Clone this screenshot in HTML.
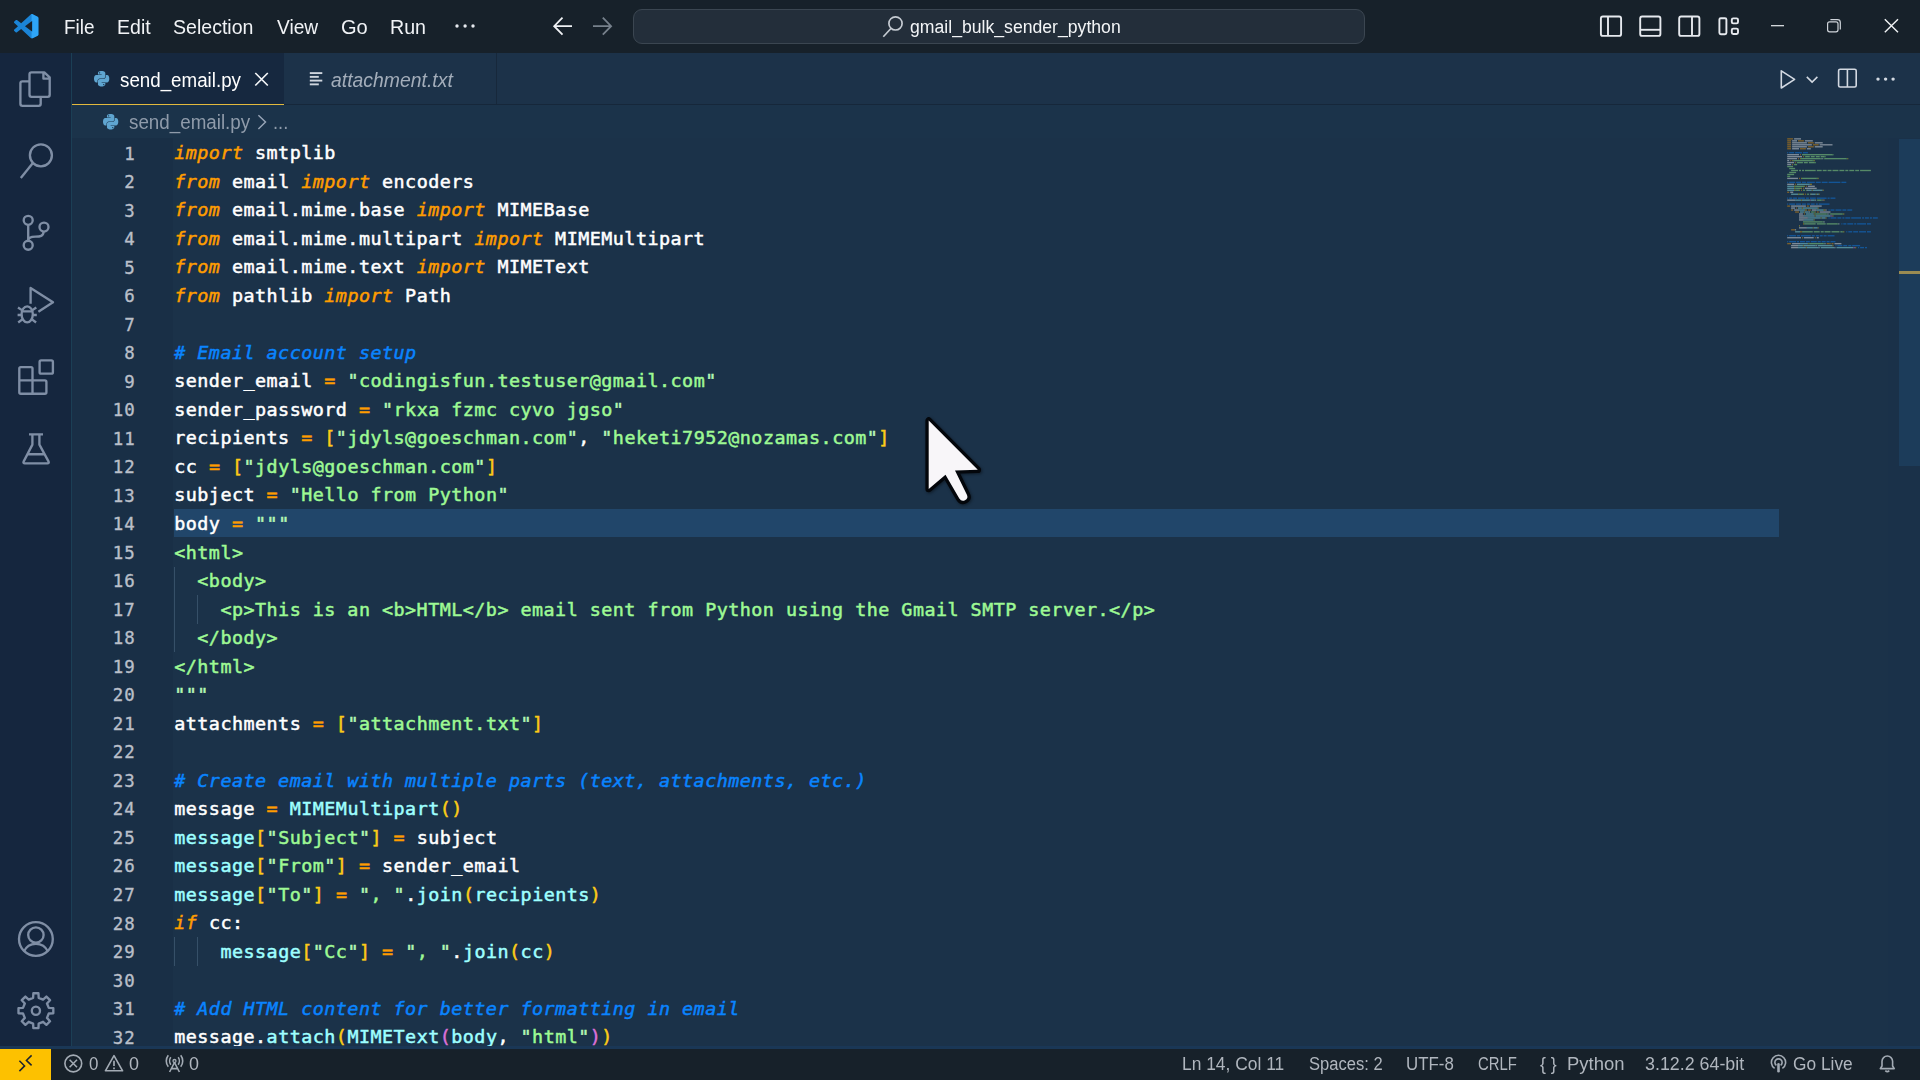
<!DOCTYPE html>
<html lang="en"><head><meta charset="utf-8"><title>send_email.py - gmail_bulk_sender_python - Visual Studio Code</title>
<style>

*{box-sizing:border-box;margin:0;padding:0}
html,body{width:1920px;height:1080px;overflow:hidden;background:#1b3249}
body{font-family:"Liberation Sans",sans-serif;color:#fff}
#app{position:relative;width:1920px;height:1080px;overflow:hidden;background:#1b3249}
svg{position:absolute;overflow:visible}
/* title bar */
#titlebar{position:absolute;left:0;top:0;width:1920px;height:52.5px;background:#17212a}
#search{position:absolute;left:633px;top:9px;width:732px;height:35px;border:1px solid #3b4651;border-radius:9px;background:#232e3a}
/* activity bar */
#activity{position:absolute;left:0;top:52.5px;width:71.5px;height:996px;background:#15263e}
#actborder{position:absolute;left:71px;top:52.5px;width:1px;height:996px;background:#1b3f55}
/* tabs */
#tabbar{position:absolute;left:72px;top:52.5px;width:1848px;height:52.5px;background:#1c3249}
#tabline{position:absolute;left:72px;top:104.2px;width:1848px;height:1px;background:#16273a}
#tab1{position:absolute;left:72px;top:52.5px;width:211.5px;height:52.5px;background:#16283f}
#tab1u{position:absolute;left:72px;top:103.6px;width:211.5px;height:1.6px;background:#e2b93d}
#tab2{position:absolute;left:284.5px;top:52.5px;width:212px;height:52px;background:#1c3249;border-right:1px solid #17283b}
/* breadcrumb */
#bc{position:absolute;left:72px;top:105px;width:1848px;height:33px;background:#1b334a}
/* editor */
#editor{position:absolute;left:0;top:0;width:1920px;height:1048.5px;overflow:hidden;pointer-events:none}
#gutter{position:absolute;left:72px;top:138px;width:101px;height:911px;background:#192f46}
#hl{position:absolute;left:174px;top:508.6px;width:1605px;height:28.5px;background:#21466a}
.ln{position:absolute;left:72px;width:63.9px;text-align:right;font:17.4px/28.5px "DejaVu Sans Mono",monospace;letter-spacing:1.05px;color:#b9bfc9;white-space:pre;height:28.5px;-webkit-text-stroke:0.35px;margin-top:0.6px}
.cl{position:absolute;left:174.25px;font:18.4px/28.5px "DejaVu Sans Mono",monospace;letter-spacing:0.469px;white-space:pre;height:28.5px;-webkit-text-stroke:0.5px;margin-top:0.3px}
.guide{position:absolute;width:1.3px;background:#365068}
.k{color:#ff9d00;font-style:italic}
.w{color:#ffffff}
.s{color:#9ef994}
.q{color:#b4f7b4}
.c{color:#0a84ff;font-style:italic}
.o{color:#ff9d00}
.y{color:#fbcb17}
.p{color:#da70d6}
.f{color:#9effff}
.t{position:absolute;white-space:pre;transform-origin:0 0;font-family:"Liberation Sans",sans-serif}
#sbtrack{position:absolute;left:1888px;top:138px;width:32px;height:911px;background:#1a3149}
#slider{position:absolute;left:1899px;top:138.5px;width:21px;height:327px;background:#1c3c5a}
#sbmark{position:absolute;left:1899px;top:271px;width:21px;height:3px;background:#9a8b52}
/* status bar */
#status{position:absolute;left:0;top:1048.8px;width:1920px;height:31.2px;background:#17212a}
#stborder{position:absolute;left:0;top:1046.2px;width:1920px;height:2.8px;background:#1a3756}
#remote{position:absolute;left:0;top:0;width:51px;height:31.5px;background:#fdc100}

</style></head>
<body>
<div id="app">
<div id="titlebar"><div class="t" style="left:64.31px;top:17.15px;font-size:19.5px;line-height:21.78px;color:#f1f3f6;transform:scaleX(0.9699)">File</div><div class="t" style="left:117.17px;top:17.15px;font-size:19.5px;line-height:21.78px;color:#f1f3f6;transform:scaleX(1.0010)">Edit</div><div class="t" style="left:173.41px;top:17.15px;font-size:19.5px;line-height:21.78px;color:#f1f3f6;transform:scaleX(1.0027)">Selection</div><div class="t" style="left:276.81px;top:17.15px;font-size:19.5px;line-height:21.78px;color:#f1f3f6;transform:scaleX(0.9823)">View</div><div class="t" style="left:340.78px;top:17.15px;font-size:19.5px;line-height:21.78px;color:#f1f3f6;transform:scaleX(1.0277)">Go</div><div class="t" style="left:389.71px;top:17.15px;font-size:19.5px;line-height:21.78px;color:#f1f3f6;transform:scaleX(1.0057)">Run</div><div id="search"></div><div class="t" style="left:910.32px;top:16.71px;font-size:18px;line-height:20.11px;color:#f3f5f7;transform:scaleX(0.9794)">gmail_bulk_sender_python</div><svg style="left:13.8px;top:13.6px" width="24.4" height="24.4" viewBox="0 0 100 100"><defs><clipPath id="vsr"><rect x="72" y="-2" width="30" height="104"/></clipPath></defs><path d="M70.9119 99.3171C72.4869 99.9307 74.2828 99.8914 75.8725 99.1264L96.4608 89.2197C98.6242 88.1787 100 85.9892 100 83.5872V16.4133C100 14.0113 98.6243 11.8218 96.4609 10.7808L75.8725 0.873756C73.7862 -0.130129 71.3446 0.11576 69.5135 1.44695C69.252 1.63711 69.0028 1.84943 68.769 2.08341L29.3551 38.0415L12.1872 25.0096C10.589 23.7965 8.35363 23.8959 6.86933 25.2461L1.36303 30.2549C-0.452552 31.9064 -0.454633 34.7627 1.35853 36.417L16.2471 50.0001L1.35853 63.5832C-0.454633 65.2374 -0.452552 68.0938 1.36303 69.7453L6.86933 74.7541C8.35363 76.1043 10.589 76.2037 12.1872 74.9905L29.3551 61.9587L68.769 97.9167C69.3925 98.5406 70.1246 99.0104 70.9119 99.3171ZM75.0152 27.2989L45.1091 50.0001L75.0152 72.7012V27.2989Z" fill="#1b84d6" fill-rule="evenodd"/><path d="M70.9119 99.3171C72.4869 99.9307 74.2828 99.8914 75.8725 99.1264L96.4608 89.2197C98.6242 88.1787 100 85.9892 100 83.5872V16.4133C100 14.0113 98.6243 11.8218 96.4609 10.7808L75.8725 0.873756C73.7862 -0.130129 71.3446 0.11576 69.5135 1.44695C69.252 1.63711 69.0028 1.84943 68.769 2.08341L29.3551 38.0415L12.1872 25.0096C10.589 23.7965 8.35363 23.8959 6.86933 25.2461L1.36303 30.2549C-0.452552 31.9064 -0.454633 34.7627 1.35853 36.417L16.2471 50.0001L1.35853 63.5832C-0.454633 65.2374 -0.452552 68.0938 1.36303 69.7453L6.86933 74.7541C8.35363 76.1043 10.589 76.2037 12.1872 74.9905L29.3551 61.9587L68.769 97.9167C69.3925 98.5406 70.1246 99.0104 70.9119 99.3171ZM75.0152 27.2989L45.1091 50.0001L75.0152 72.7012V27.2989Z" fill="#2ea5f7" fill-rule="evenodd" clip-path="url(#vsr)"/></svg><svg style="left:0;top:0" width="1920" height="1080" ><circle cx="457" cy="26" r="1.7" fill="#e6e9ee"/><circle cx="465.1" cy="26" r="1.7" fill="#e6e9ee"/><circle cx="473" cy="26" r="1.7" fill="#e6e9ee"/><path fill="none" stroke="#f0f2f5" stroke-width="1.8" d="M572 26.2H554.5 M562.5 17.7L554.2 26.2L562.5 34.7"/><path fill="none" stroke="#77818c" stroke-width="1.8" d="M593 26.2H610.8 M602.8 17.7L611.1 26.2L602.8 34.7"/><circle fill="none" stroke="#c5cbd2" stroke-width="1.7" cx="895.5" cy="23.4" r="6.6"/><path stroke="#c5cbd2" stroke-width="1.7" d="M890.9 28.5L883.3 36.8"/><rect fill="none" stroke="#e6e9ee" stroke-width="1.9" stroke-linejoin="round" x="1600.9" y="16.5" width="20.2" height="19.4" rx="2"/><path fill="none" stroke="#e6e9ee" stroke-width="1.9" stroke-linejoin="round" d="M1608 16.5V35.9"/><rect fill="none" stroke="#e6e9ee" stroke-width="1.9" stroke-linejoin="round" x="1640.2" y="16.5" width="20.2" height="19.4" rx="2"/><path fill="none" stroke="#e6e9ee" stroke-width="1.9" stroke-linejoin="round" d="M1640.2 29.8H1660.4"/><rect fill="none" stroke="#e6e9ee" stroke-width="1.9" stroke-linejoin="round" x="1679.2" y="16.5" width="20.2" height="19.4" rx="2"/><path fill="none" stroke="#e6e9ee" stroke-width="1.9" stroke-linejoin="round" d="M1692 16.5V35.9"/><rect fill="none" stroke="#e6e9ee" stroke-width="1.9" stroke-linejoin="round" x="1719.4" y="18.2" width="7" height="16" rx="1.4"/><rect fill="none" stroke="#e6e9ee" stroke-width="1.9" stroke-linejoin="round" x="1731.8" y="18.4" width="6.2" height="5" rx="1.4"/><rect fill="none" stroke="#e6e9ee" stroke-width="1.9" stroke-linejoin="round" x="1731.8" y="28.6" width="6.2" height="5.4" rx="1.4"/><path stroke="#e8ebef" stroke-width="1.2" d="M1771 25.7H1784"/><rect fill="none" stroke="#cfd4da" stroke-width="1.2" x="1827.6" y="21.8" width="10.4" height="10" rx="2"/><path fill="none" stroke="#cfd4da" stroke-width="1.2" d="M1830.4 19.6H1837.5Q1840.3 19.6 1840.3 22.4V29.6"/><path stroke="#f2f4f6" stroke-width="1.4" d="M1884.8 19.2L1898 32.2 M1898 19.2L1884.8 32.2"/></svg></div>
<div id="activity"></div><div id="actborder"></div><svg style="left:0;top:0" width="1920" height="1080" ><path fill="none" stroke="#7f8ea5" stroke-width="2.35" stroke-linejoin="round" stroke-linecap="butt" d="M31.5 72.3H44.3L49.7 77.3V94.8Q49.7 96.8 47.7 96.8H31.5Q29.5 96.8 29.5 94.8V74.3Q29.5 72.3 31.5 72.3Z M43.4 72.6V78.6H49.5 M29.5 81.3H22.4Q20.4 81.3 20.4 83.3V103.8Q20.4 105.8 22.4 105.8H38.7Q40.7 105.8 40.7 103.8V97"/><circle fill="none" stroke="#7f8ea5" stroke-width="2.35" stroke-linejoin="round" stroke-linecap="butt" cx="40.9" cy="155.3" r="11"/><path fill="none" stroke="#7f8ea5" stroke-width="2.35" stroke-linejoin="round" stroke-linecap="butt" d="M32.9 163.1L20.8 177.9"/><circle fill="none" stroke="#7f8ea5" stroke-width="2.35" stroke-linejoin="round" stroke-linecap="butt" cx="28.2" cy="220.3" r="4.5"/><circle fill="none" stroke="#7f8ea5" stroke-width="2.35" stroke-linejoin="round" stroke-linecap="butt" cx="44" cy="227.1" r="4.5"/><circle fill="none" stroke="#7f8ea5" stroke-width="2.35" stroke-linejoin="round" stroke-linecap="butt" cx="28.2" cy="245.2" r="4.5"/><path fill="none" stroke="#7f8ea5" stroke-width="2.35" stroke-linejoin="round" stroke-linecap="butt" d="M28.2 224.8V240.7 M43.6 231.6C43.6 236.2 40 236.6 35.5 236.6C31 236.6 28.2 237.6 28.2 240.7"/><path fill="none" stroke="#7f8ea5" stroke-width="2.35" stroke-linejoin="round" stroke-linecap="butt" d="M30.6 303.8V287.9L53 302.3L38.4 311.7"/><ellipse fill="none" stroke="#7f8ea5" stroke-width="2.35" stroke-linejoin="round" stroke-linecap="butt" cx="27.2" cy="314.3" rx="5.6" ry="8"/><path fill="none" stroke="#7f8ea5" stroke-width="2.35" stroke-linejoin="round" stroke-linecap="butt" d="M21.8 311.3H32.6 M18 307.5L22.3 310.4 M36.3 307.5L32.1 310.4 M17.6 315H21.4 M33 315H36.8 M18.2 322.5L22.4 319.4 M36.1 322.5L32 319.4"/><rect fill="none" stroke="#7f8ea5" stroke-width="2.35" stroke-linejoin="round" stroke-linecap="butt" x="39.6" y="360.4" width="13.3" height="13.3" rx="1.5"/><path fill="none" stroke="#7f8ea5" stroke-width="2.35" stroke-linejoin="round" stroke-linecap="butt" d="M32.5 380.4V368.6Q32.5 367.1 31 367.1H20.8Q19.3 367.1 19.3 368.6V392.2Q19.3 393.7 20.8 393.7H44.9Q46.4 393.7 46.4 392.2V381.9Q46.4 380.4 44.9 380.4H19.3 M32.5 380.4V393.7"/><path fill="none" stroke="#7f8ea5" stroke-width="2.35" stroke-linejoin="round" stroke-linecap="butt" d="M29 434.4H43 M32.4 434.4V444.6L23.6 461.6Q22.9 463.4 24.8 463.4H47.4Q49.3 463.4 48.6 461.6L39.4 444.6V434.4 M27.9 454.2H44.3"/><circle fill="none" stroke="#7f8ea5" stroke-width="2.35" stroke-linejoin="round" stroke-linecap="butt" cx="35.9" cy="939" r="16.9"/><circle fill="none" stroke="#7f8ea5" stroke-width="2.35" stroke-linejoin="round" stroke-linecap="butt" cx="35.9" cy="935" r="7.7"/><path fill="none" stroke="#7f8ea5" stroke-width="2.35" stroke-linejoin="round" stroke-linecap="butt" d="M23.9 951.6C26.6 945.6 31 943.9 35.9 943.9C40.8 943.9 45.2 945.6 47.9 951.6"/><path fill="none" stroke="#7f8ea5" stroke-width="2.35" stroke-linejoin="round" stroke-linecap="butt" d="M33.12 997.80L33.35 993.29L38.45 993.29L38.68 997.80L43.06 999.61L46.41 996.58L50.02 1000.19L46.99 1003.54L48.80 1007.92L53.31 1008.15L53.31 1013.25L48.80 1013.48L46.99 1017.86L50.02 1021.21L46.41 1024.82L43.06 1021.79L38.68 1023.60L38.45 1028.11L33.35 1028.11L33.12 1023.60L28.74 1021.79L25.39 1024.82L21.78 1021.21L24.81 1017.86L23.00 1013.48L18.49 1013.25L18.49 1008.15L23.00 1007.92L24.81 1003.54L21.78 1000.19L25.39 996.58L28.74 999.61Z"/><circle fill="none" stroke="#7f8ea5" stroke-width="2.35" stroke-linejoin="round" stroke-linecap="butt" cx="35.9" cy="1010.7" r="4.1"/></svg>
<div id="tabbar"></div><div id="tab1"></div><div id="tab2"></div><div id="tabline"></div><div id="tab1u"></div><div class="t" style="left:120.13px;top:70.05px;font-size:19.5px;line-height:21.78px;color:#ffffff;transform:scaleX(0.9618)">send_email.py</div><div class="t" style="left:331.45px;top:70.05px;font-size:19.5px;line-height:21.78px;color:#a3adba;font-style:italic;transform:scaleX(0.9948)">attachment.txt</div><svg style="left:0;top:0" width="1920" height="1080" ><path stroke="#f4f6f8" stroke-width="1.7" d="M255.3 73L267.8 85.5 M267.8 73L255.3 85.5"/><path stroke="#cfd6de" stroke-width="1.9" d="M309.8 73.1H322.3"/><path stroke="#cfd6de" stroke-width="1.9" d="M309.8 76.85H318.8"/><path stroke="#cfd6de" stroke-width="1.9" d="M309.8 80.6H322.3"/><path stroke="#cfd6de" stroke-width="1.9" d="M309.8 84.35H318.8"/><path fill="none" stroke="#d3d9e2" stroke-width="1.6" stroke-linejoin="round" d="M1781.3 70.8V88L1794.6 79.4Z"/><path fill="none" stroke="#d3d9e2" stroke-width="1.5" d="M1806.8 76.9L1812.1 82.1L1817.4 76.9"/><rect fill="none" stroke="#d3d9e2" stroke-width="1.6" x="1838.6" y="69.2" width="17.6" height="17.8" rx="1.6"/><path stroke="#d3d9e2" stroke-width="1.6" d="M1847.4 69.2V87"/><circle cx="1878" cy="79.1" r="1.7" fill="#d3d9e2"/><circle cx="1885.6" cy="79.1" r="1.7" fill="#d3d9e2"/><circle cx="1893.1" cy="79.1" r="1.7" fill="#d3d9e2"/></svg><svg style="left:93.9px;top:70.6px" width="15.3" height="15.44" viewBox="0 0 111 112"><path d="M54.9 0C50.3 0 45.9 0.4 42.1 1.1C30.8 3.1 28.7 7.3 28.7 15V25.2H55.5V28.6H18.7C10.9 28.6 4.1 33.3 2 42.2C-0.5 52.4-0.6 58.8 2 69.5C3.9 77.4 8.4 83 16.2 83H25.4V70.8C25.4 62 33 54.2 42.1 54.2H68.8C76.2 54.2 82.1 48.1 82.1 40.7V15C82.1 7.8 76 2.3 68.8 1.1C64.2 0.3 59.5 0 54.9 0ZM40.4 8.2C43.2 8.2 45.4 10.5 45.4 13.3C45.4 16.1 43.2 18.4 40.4 18.4C37.6 18.4 35.4 16.1 35.4 13.3C35.4 10.5 37.6 8.2 40.4 8.2Z" fill="#5fa5d0" fill-rule="evenodd"/><path d="M85.6 28.6V40.7C85.6 50 77.7 57.8 68.8 57.8H42.1C34.8 57.8 28.7 64.1 28.7 71.4V96.9C28.7 104.1 35 108.4 42.1 110.5C50.6 113 58.7 113.4 68.8 110.5C75.5 108.5 82.1 104.6 82.1 96.9V86.7H55.5V83.3H95.5C103.3 83.3 106.2 77.9 108.9 69.8C111.7 61.4 111.6 53.3 108.9 42.5C107 34.8 103.3 28.6 95.5 28.6H85.6ZM70.6 93.5C73.4 93.5 75.6 95.8 75.6 98.6C75.6 101.4 73.4 103.7 70.6 103.7C67.8 103.7 65.6 101.4 65.6 98.6C65.6 95.8 67.8 93.5 70.6 93.5Z" fill="#5fa5d0" fill-rule="evenodd"/></svg>
<div id="bc"></div><div class="t" style="left:128.93px;top:112.05px;font-size:19.5px;line-height:21.78px;color:#8f9baa;transform:scaleX(0.9634)">send_email.py</div><div class="t" style="left:273.39px;top:112.05px;font-size:19.5px;line-height:21.78px;color:#8f9baa;transform:scaleX(0.9364)">...</div><svg style="left:0;top:0" width="1920" height="1080" ><path fill="none" stroke="#98a5b7" stroke-width="1.45" d="M258.4 115.3L265.5 122.1L258.4 128.9"/></svg><svg style="left:102.9px;top:114.1px" width="15.3" height="15.44" viewBox="0 0 111 112"><path d="M54.9 0C50.3 0 45.9 0.4 42.1 1.1C30.8 3.1 28.7 7.3 28.7 15V25.2H55.5V28.6H18.7C10.9 28.6 4.1 33.3 2 42.2C-0.5 52.4-0.6 58.8 2 69.5C3.9 77.4 8.4 83 16.2 83H25.4V70.8C25.4 62 33 54.2 42.1 54.2H68.8C76.2 54.2 82.1 48.1 82.1 40.7V15C82.1 7.8 76 2.3 68.8 1.1C64.2 0.3 59.5 0 54.9 0ZM40.4 8.2C43.2 8.2 45.4 10.5 45.4 13.3C45.4 16.1 43.2 18.4 40.4 18.4C37.6 18.4 35.4 16.1 35.4 13.3C35.4 10.5 37.6 8.2 40.4 8.2Z" fill="#5fa5d0" fill-rule="evenodd"/><path d="M85.6 28.6V40.7C85.6 50 77.7 57.8 68.8 57.8H42.1C34.8 57.8 28.7 64.1 28.7 71.4V96.9C28.7 104.1 35 108.4 42.1 110.5C50.6 113 58.7 113.4 68.8 110.5C75.5 108.5 82.1 104.6 82.1 96.9V86.7H55.5V83.3H95.5C103.3 83.3 106.2 77.9 108.9 69.8C111.7 61.4 111.6 53.3 108.9 42.5C107 34.8 103.3 28.6 95.5 28.6H85.6ZM70.6 93.5C73.4 93.5 75.6 95.8 75.6 98.6C75.6 101.4 73.4 103.7 70.6 103.7C67.8 103.7 65.6 101.4 65.6 98.6C65.6 95.8 67.8 93.5 70.6 93.5Z" fill="#5fa5d0" fill-rule="evenodd"/></svg>
<div id="editor">
<div id="gutter"></div>
<div id="hl"></div>
<div class="guide" style="left:174.0px;top:566.7px;height:85.5px"></div>
<div class="guide" style="left:197.1px;top:595.3px;height:28.5px"></div>
<div class="guide" style="left:174.0px;top:937.4px;height:28.5px"></div>
<div class="guide" style="left:197.1px;top:937.4px;height:28.5px"></div>
<div class="ln" style="top:139.00px">1</div>
<div class="cl" style="top:139.00px"><span class="k">import</span><span class="w"> smtplib</span></div>
<div class="ln" style="top:167.52px">2</div>
<div class="cl" style="top:167.52px"><span class="k">from</span><span class="w"> email </span><span class="k">import</span><span class="w"> encoders</span></div>
<div class="ln" style="top:196.03px">3</div>
<div class="cl" style="top:196.03px"><span class="k">from</span><span class="w"> email.mime.base </span><span class="k">import</span><span class="w"> MIMEBase</span></div>
<div class="ln" style="top:224.55px">4</div>
<div class="cl" style="top:224.55px"><span class="k">from</span><span class="w"> email.mime.multipart </span><span class="k">import</span><span class="w"> MIMEMultipart</span></div>
<div class="ln" style="top:253.06px">5</div>
<div class="cl" style="top:253.06px"><span class="k">from</span><span class="w"> email.mime.text </span><span class="k">import</span><span class="w"> MIMEText</span></div>
<div class="ln" style="top:281.58px">6</div>
<div class="cl" style="top:281.58px"><span class="k">from</span><span class="w"> pathlib </span><span class="k">import</span><span class="w"> Path</span></div>
<div class="ln" style="top:310.10px">7</div>
<div class="ln" style="top:338.61px">8</div>
<div class="cl" style="top:338.61px"><span class="c"># Email account setup</span></div>
<div class="ln" style="top:367.13px">9</div>
<div class="cl" style="top:367.13px"><span class="w">sender_email </span><span class="o">=</span><span class="w"> </span><span class="q">"</span><span class="s">codingisfun.testuser@gmail.com</span><span class="q">"</span></div>
<div class="ln" style="top:395.64px">10</div>
<div class="cl" style="top:395.64px"><span class="w">sender_password </span><span class="o">=</span><span class="w"> </span><span class="q">"</span><span class="s">rkxa fzmc cyvo jgso</span><span class="q">"</span></div>
<div class="ln" style="top:424.16px">11</div>
<div class="cl" style="top:424.16px"><span class="w">recipients </span><span class="o">=</span><span class="w"> </span><span class="y">[</span><span class="q">"</span><span class="s">jdyls@goeschman.com</span><span class="q">"</span><span class="w">, </span><span class="q">"</span><span class="s">heketi7952@nozamas.com</span><span class="q">"</span><span class="y">]</span></div>
<div class="ln" style="top:452.68px">12</div>
<div class="cl" style="top:452.68px"><span class="w">cc </span><span class="o">=</span><span class="w"> </span><span class="y">[</span><span class="q">"</span><span class="s">jdyls@goeschman.com</span><span class="q">"</span><span class="y">]</span></div>
<div class="ln" style="top:481.19px">13</div>
<div class="cl" style="top:481.19px"><span class="w">subject </span><span class="o">=</span><span class="w"> </span><span class="q">"</span><span class="s">Hello from Python</span><span class="q">"</span></div>
<div class="ln" style="top:509.71px">14</div>
<div class="cl" style="top:509.71px"><span class="w">body </span><span class="o">=</span><span class="w"> </span><span class="q">"""</span></div>
<div class="ln" style="top:538.22px">15</div>
<div class="cl" style="top:538.22px"><span class="s">&lt;html&gt;</span></div>
<div class="ln" style="top:566.74px">16</div>
<div class="cl" style="top:566.74px"><span class="s">  &lt;body&gt;</span></div>
<div class="ln" style="top:595.26px">17</div>
<div class="cl" style="top:595.26px"><span class="s">    &lt;p&gt;This is an &lt;b&gt;HTML&lt;/b&gt; email sent from Python using the Gmail SMTP server.&lt;/p&gt;</span></div>
<div class="ln" style="top:623.77px">18</div>
<div class="cl" style="top:623.77px"><span class="s">  &lt;/body&gt;</span></div>
<div class="ln" style="top:652.29px">19</div>
<div class="cl" style="top:652.29px"><span class="s">&lt;/html&gt;</span></div>
<div class="ln" style="top:680.80px">20</div>
<div class="cl" style="top:680.80px"><span class="q">"""</span></div>
<div class="ln" style="top:709.32px">21</div>
<div class="cl" style="top:709.32px"><span class="w">attachments </span><span class="o">=</span><span class="w"> </span><span class="y">[</span><span class="q">"</span><span class="s">attachment.txt</span><span class="q">"</span><span class="y">]</span></div>
<div class="ln" style="top:737.84px">22</div>
<div class="ln" style="top:766.35px">23</div>
<div class="cl" style="top:766.35px"><span class="c"># Create email with multiple parts (text, attachments, etc.)</span></div>
<div class="ln" style="top:794.87px">24</div>
<div class="cl" style="top:794.87px"><span class="w">message </span><span class="o">=</span><span class="w"> </span><span class="f">MIMEMultipart</span><span class="y">()</span></div>
<div class="ln" style="top:823.38px">25</div>
<div class="cl" style="top:823.38px"><span class="f">message</span><span class="y">[</span><span class="q">"</span><span class="s">Subject</span><span class="q">"</span><span class="y">]</span><span class="w"> </span><span class="o">=</span><span class="w"> subject</span></div>
<div class="ln" style="top:851.90px">26</div>
<div class="cl" style="top:851.90px"><span class="f">message</span><span class="y">[</span><span class="q">"</span><span class="s">From</span><span class="q">"</span><span class="y">]</span><span class="w"> </span><span class="o">=</span><span class="w"> sender_email</span></div>
<div class="ln" style="top:880.42px">27</div>
<div class="cl" style="top:880.42px"><span class="f">message</span><span class="y">[</span><span class="q">"</span><span class="s">To</span><span class="q">"</span><span class="y">]</span><span class="w"> </span><span class="o">=</span><span class="w"> </span><span class="q">"</span><span class="s">, </span><span class="q">"</span><span class="w">.</span><span class="f">join</span><span class="y">(</span><span class="f">recipients</span><span class="y">)</span></div>
<div class="ln" style="top:908.93px">28</div>
<div class="cl" style="top:908.93px"><span class="k">if</span><span class="w"> cc:</span></div>
<div class="ln" style="top:937.45px">29</div>
<div class="cl" style="top:937.45px"><span class="w">    </span><span class="f">message</span><span class="y">[</span><span class="q">"</span><span class="s">Cc</span><span class="q">"</span><span class="y">]</span><span class="w"> </span><span class="o">=</span><span class="w"> </span><span class="q">"</span><span class="s">, </span><span class="q">"</span><span class="w">.</span><span class="f">join</span><span class="y">(</span><span class="f">cc</span><span class="y">)</span></div>
<div class="ln" style="top:965.96px">30</div>
<div class="ln" style="top:994.48px">31</div>
<div class="cl" style="top:994.48px"><span class="c"># Add HTML content for better formatting in email</span></div>
<div class="ln" style="top:1023.00px">32</div>
<div class="cl" style="top:1023.00px"><span class="w">message.</span><span class="f">attach</span><span class="y">(</span><span class="f">MIMEText</span><span class="p">(</span><span class="f">body</span><span class="w">, </span><span class="q">"</span><span class="s">html</span><span class="q">"</span><span class="p">)</span><span class="y">)</span></div>
<svg style="left:0;top:0" width="1920" height="1080"><g opacity="0.43"><rect x="1787.2" y="138.20" width="5.9" height="1.35" fill="#ff9d00"/><rect x="1794.1" y="138.20" width="6.9" height="1.35" fill="#ffffff"/><rect x="1787.2" y="140.18" width="3.9" height="1.35" fill="#ff9d00"/><rect x="1792.1" y="140.18" width="4.9" height="1.35" fill="#ffffff"/><rect x="1798.0" y="140.18" width="5.9" height="1.35" fill="#ff9d00"/><rect x="1804.9" y="140.18" width="7.9" height="1.35" fill="#ffffff"/><rect x="1787.2" y="142.15" width="3.9" height="1.35" fill="#ff9d00"/><rect x="1792.1" y="142.15" width="14.8" height="1.35" fill="#ffffff"/><rect x="1807.9" y="142.15" width="5.9" height="1.35" fill="#ff9d00"/><rect x="1814.8" y="142.15" width="7.9" height="1.35" fill="#ffffff"/><rect x="1787.2" y="144.13" width="3.9" height="1.35" fill="#ff9d00"/><rect x="1792.1" y="144.13" width="19.7" height="1.35" fill="#ffffff"/><rect x="1812.8" y="144.13" width="5.9" height="1.35" fill="#ff9d00"/><rect x="1819.7" y="144.13" width="12.8" height="1.35" fill="#ffffff"/><rect x="1787.2" y="146.11" width="3.9" height="1.35" fill="#ff9d00"/><rect x="1792.1" y="146.11" width="14.8" height="1.35" fill="#ffffff"/><rect x="1807.9" y="146.11" width="5.9" height="1.35" fill="#ff9d00"/><rect x="1814.8" y="146.11" width="7.9" height="1.35" fill="#ffffff"/><rect x="1787.2" y="148.08" width="3.9" height="1.35" fill="#ff9d00"/><rect x="1792.1" y="148.08" width="6.9" height="1.35" fill="#ffffff"/><rect x="1800.0" y="148.08" width="5.9" height="1.35" fill="#ff9d00"/><rect x="1806.9" y="148.08" width="3.9" height="1.35" fill="#ffffff"/><rect x="1787.2" y="152.04" width="1.0" height="1.35" fill="#0a84ff"/><rect x="1789.2" y="152.04" width="4.9" height="1.35" fill="#0a84ff"/><rect x="1795.1" y="152.04" width="6.9" height="1.35" fill="#0a84ff"/><rect x="1803.0" y="152.04" width="4.9" height="1.35" fill="#0a84ff"/><rect x="1787.2" y="154.02" width="11.8" height="1.35" fill="#ffffff"/><rect x="1800.0" y="154.02" width="1.0" height="1.35" fill="#ff9d00"/><rect x="1802.0" y="154.02" width="1.0" height="1.35" fill="#92fc79"/><rect x="1803.0" y="154.02" width="29.6" height="1.35" fill="#a5ff90"/><rect x="1832.5" y="154.02" width="1.0" height="1.35" fill="#92fc79"/><rect x="1787.2" y="155.99" width="14.8" height="1.35" fill="#ffffff"/><rect x="1803.0" y="155.99" width="1.0" height="1.35" fill="#ff9d00"/><rect x="1804.9" y="155.99" width="1.0" height="1.35" fill="#92fc79"/><rect x="1805.9" y="155.99" width="3.9" height="1.35" fill="#a5ff90"/><rect x="1810.8" y="155.99" width="3.9" height="1.35" fill="#a5ff90"/><rect x="1815.8" y="155.99" width="3.9" height="1.35" fill="#a5ff90"/><rect x="1820.7" y="155.99" width="3.9" height="1.35" fill="#a5ff90"/><rect x="1824.6" y="155.99" width="1.0" height="1.35" fill="#92fc79"/><rect x="1787.2" y="157.97" width="9.8" height="1.35" fill="#ffffff"/><rect x="1798.0" y="157.97" width="1.0" height="1.35" fill="#ff9d00"/><rect x="1800.0" y="157.97" width="1.0" height="1.35" fill="#fbcb17"/><rect x="1801.0" y="157.97" width="1.0" height="1.35" fill="#92fc79"/><rect x="1802.0" y="157.97" width="18.7" height="1.35" fill="#a5ff90"/><rect x="1820.7" y="157.97" width="1.0" height="1.35" fill="#92fc79"/><rect x="1821.7" y="157.97" width="1.0" height="1.35" fill="#ffffff"/><rect x="1823.6" y="157.97" width="1.0" height="1.35" fill="#92fc79"/><rect x="1824.6" y="157.97" width="21.7" height="1.35" fill="#a5ff90"/><rect x="1846.3" y="157.97" width="1.0" height="1.35" fill="#92fc79"/><rect x="1847.3" y="157.97" width="1.0" height="1.35" fill="#fbcb17"/><rect x="1787.2" y="159.95" width="2.0" height="1.35" fill="#ffffff"/><rect x="1790.2" y="159.95" width="1.0" height="1.35" fill="#ff9d00"/><rect x="1792.1" y="159.95" width="1.0" height="1.35" fill="#fbcb17"/><rect x="1793.1" y="159.95" width="1.0" height="1.35" fill="#92fc79"/><rect x="1794.1" y="159.95" width="18.7" height="1.35" fill="#a5ff90"/><rect x="1812.8" y="159.95" width="1.0" height="1.35" fill="#92fc79"/><rect x="1813.8" y="159.95" width="1.0" height="1.35" fill="#fbcb17"/><rect x="1787.2" y="161.92" width="6.9" height="1.35" fill="#ffffff"/><rect x="1795.1" y="161.92" width="1.0" height="1.35" fill="#ff9d00"/><rect x="1797.0" y="161.92" width="1.0" height="1.35" fill="#92fc79"/><rect x="1798.0" y="161.92" width="4.9" height="1.35" fill="#a5ff90"/><rect x="1803.9" y="161.92" width="3.9" height="1.35" fill="#a5ff90"/><rect x="1808.9" y="161.92" width="5.9" height="1.35" fill="#a5ff90"/><rect x="1814.8" y="161.92" width="1.0" height="1.35" fill="#92fc79"/><rect x="1787.2" y="163.90" width="3.9" height="1.35" fill="#ffffff"/><rect x="1792.1" y="163.90" width="1.0" height="1.35" fill="#ff9d00"/><rect x="1794.1" y="163.90" width="3.0" height="1.35" fill="#92fc79"/><rect x="1787.2" y="165.88" width="5.9" height="1.35" fill="#a5ff90"/><rect x="1789.2" y="167.85" width="5.9" height="1.35" fill="#a5ff90"/><rect x="1791.1" y="169.83" width="6.9" height="1.35" fill="#a5ff90"/><rect x="1799.0" y="169.83" width="2.0" height="1.35" fill="#a5ff90"/><rect x="1802.0" y="169.83" width="2.0" height="1.35" fill="#a5ff90"/><rect x="1804.9" y="169.83" width="10.8" height="1.35" fill="#a5ff90"/><rect x="1816.8" y="169.83" width="4.9" height="1.35" fill="#a5ff90"/><rect x="1822.7" y="169.83" width="3.9" height="1.35" fill="#a5ff90"/><rect x="1827.6" y="169.83" width="3.9" height="1.35" fill="#a5ff90"/><rect x="1832.5" y="169.83" width="5.9" height="1.35" fill="#a5ff90"/><rect x="1839.4" y="169.83" width="4.9" height="1.35" fill="#a5ff90"/><rect x="1845.3" y="169.83" width="3.0" height="1.35" fill="#a5ff90"/><rect x="1849.3" y="169.83" width="4.9" height="1.35" fill="#a5ff90"/><rect x="1855.2" y="169.83" width="3.9" height="1.35" fill="#a5ff90"/><rect x="1860.1" y="169.83" width="10.8" height="1.35" fill="#a5ff90"/><rect x="1789.2" y="171.81" width="6.9" height="1.35" fill="#a5ff90"/><rect x="1787.2" y="173.79" width="6.9" height="1.35" fill="#a5ff90"/><rect x="1787.2" y="175.76" width="3.0" height="1.35" fill="#92fc79"/><rect x="1787.2" y="177.74" width="10.8" height="1.35" fill="#ffffff"/><rect x="1799.0" y="177.74" width="1.0" height="1.35" fill="#ff9d00"/><rect x="1801.0" y="177.74" width="1.0" height="1.35" fill="#fbcb17"/><rect x="1802.0" y="177.74" width="1.0" height="1.35" fill="#92fc79"/><rect x="1803.0" y="177.74" width="13.8" height="1.35" fill="#a5ff90"/><rect x="1816.8" y="177.74" width="1.0" height="1.35" fill="#92fc79"/><rect x="1817.7" y="177.74" width="1.0" height="1.35" fill="#fbcb17"/><rect x="1787.2" y="181.69" width="1.0" height="1.35" fill="#0a84ff"/><rect x="1789.2" y="181.69" width="5.9" height="1.35" fill="#0a84ff"/><rect x="1796.1" y="181.69" width="4.9" height="1.35" fill="#0a84ff"/><rect x="1802.0" y="181.69" width="3.9" height="1.35" fill="#0a84ff"/><rect x="1806.9" y="181.69" width="7.9" height="1.35" fill="#0a84ff"/><rect x="1815.8" y="181.69" width="4.9" height="1.35" fill="#0a84ff"/><rect x="1821.7" y="181.69" width="5.9" height="1.35" fill="#0a84ff"/><rect x="1828.6" y="181.69" width="11.8" height="1.35" fill="#0a84ff"/><rect x="1841.4" y="181.69" width="4.9" height="1.35" fill="#0a84ff"/><rect x="1787.2" y="183.67" width="6.9" height="1.35" fill="#ffffff"/><rect x="1795.1" y="183.67" width="1.0" height="1.35" fill="#ff9d00"/><rect x="1797.0" y="183.67" width="12.8" height="1.35" fill="#9effff"/><rect x="1809.9" y="183.67" width="2.0" height="1.35" fill="#fbcb17"/><rect x="1787.2" y="185.65" width="6.9" height="1.35" fill="#9effff"/><rect x="1794.1" y="185.65" width="1.0" height="1.35" fill="#fbcb17"/><rect x="1795.1" y="185.65" width="1.0" height="1.35" fill="#92fc79"/><rect x="1796.1" y="185.65" width="6.9" height="1.35" fill="#a5ff90"/><rect x="1803.0" y="185.65" width="1.0" height="1.35" fill="#92fc79"/><rect x="1803.9" y="185.65" width="1.0" height="1.35" fill="#fbcb17"/><rect x="1805.9" y="185.65" width="1.0" height="1.35" fill="#ff9d00"/><rect x="1807.9" y="185.65" width="6.9" height="1.35" fill="#ffffff"/><rect x="1787.2" y="187.62" width="6.9" height="1.35" fill="#9effff"/><rect x="1794.1" y="187.62" width="1.0" height="1.35" fill="#fbcb17"/><rect x="1795.1" y="187.62" width="1.0" height="1.35" fill="#92fc79"/><rect x="1796.1" y="187.62" width="3.9" height="1.35" fill="#a5ff90"/><rect x="1800.0" y="187.62" width="1.0" height="1.35" fill="#92fc79"/><rect x="1801.0" y="187.62" width="1.0" height="1.35" fill="#fbcb17"/><rect x="1803.0" y="187.62" width="1.0" height="1.35" fill="#ff9d00"/><rect x="1804.9" y="187.62" width="11.8" height="1.35" fill="#ffffff"/><rect x="1787.2" y="189.60" width="6.9" height="1.35" fill="#9effff"/><rect x="1794.1" y="189.60" width="1.0" height="1.35" fill="#fbcb17"/><rect x="1795.1" y="189.60" width="1.0" height="1.35" fill="#92fc79"/><rect x="1796.1" y="189.60" width="2.0" height="1.35" fill="#a5ff90"/><rect x="1798.0" y="189.60" width="1.0" height="1.35" fill="#92fc79"/><rect x="1799.0" y="189.60" width="1.0" height="1.35" fill="#fbcb17"/><rect x="1801.0" y="189.60" width="1.0" height="1.35" fill="#ff9d00"/><rect x="1803.0" y="189.60" width="1.0" height="1.35" fill="#92fc79"/><rect x="1803.9" y="189.60" width="1.0" height="1.35" fill="#a5ff90"/><rect x="1805.9" y="189.60" width="1.0" height="1.35" fill="#92fc79"/><rect x="1806.9" y="189.60" width="1.0" height="1.35" fill="#ffffff"/><rect x="1807.9" y="189.60" width="3.9" height="1.35" fill="#9effff"/><rect x="1811.8" y="189.60" width="1.0" height="1.35" fill="#fbcb17"/><rect x="1812.8" y="189.60" width="9.8" height="1.35" fill="#9effff"/><rect x="1822.7" y="189.60" width="1.0" height="1.35" fill="#fbcb17"/><rect x="1787.2" y="191.58" width="2.0" height="1.35" fill="#ff9d00"/><rect x="1790.2" y="191.58" width="3.0" height="1.35" fill="#ffffff"/><rect x="1791.1" y="193.56" width="6.9" height="1.35" fill="#9effff"/><rect x="1798.0" y="193.56" width="1.0" height="1.35" fill="#fbcb17"/><rect x="1799.0" y="193.56" width="1.0" height="1.35" fill="#92fc79"/><rect x="1800.0" y="193.56" width="2.0" height="1.35" fill="#a5ff90"/><rect x="1802.0" y="193.56" width="1.0" height="1.35" fill="#92fc79"/><rect x="1803.0" y="193.56" width="1.0" height="1.35" fill="#fbcb17"/><rect x="1804.9" y="193.56" width="1.0" height="1.35" fill="#ff9d00"/><rect x="1806.9" y="193.56" width="1.0" height="1.35" fill="#92fc79"/><rect x="1807.9" y="193.56" width="1.0" height="1.35" fill="#a5ff90"/><rect x="1809.9" y="193.56" width="1.0" height="1.35" fill="#92fc79"/><rect x="1810.8" y="193.56" width="1.0" height="1.35" fill="#ffffff"/><rect x="1811.8" y="193.56" width="3.9" height="1.35" fill="#9effff"/><rect x="1815.8" y="193.56" width="1.0" height="1.35" fill="#fbcb17"/><rect x="1816.8" y="193.56" width="2.0" height="1.35" fill="#9effff"/><rect x="1818.7" y="193.56" width="1.0" height="1.35" fill="#fbcb17"/><rect x="1787.2" y="197.51" width="1.0" height="1.35" fill="#0a84ff"/><rect x="1789.2" y="197.51" width="3.0" height="1.35" fill="#0a84ff"/><rect x="1793.1" y="197.51" width="3.9" height="1.35" fill="#0a84ff"/><rect x="1798.0" y="197.51" width="6.9" height="1.35" fill="#0a84ff"/><rect x="1805.9" y="197.51" width="3.0" height="1.35" fill="#0a84ff"/><rect x="1809.9" y="197.51" width="5.9" height="1.35" fill="#0a84ff"/><rect x="1816.8" y="197.51" width="9.8" height="1.35" fill="#0a84ff"/><rect x="1827.6" y="197.51" width="2.0" height="1.35" fill="#0a84ff"/><rect x="1830.5" y="197.51" width="4.9" height="1.35" fill="#0a84ff"/><rect x="1787.2" y="199.49" width="7.9" height="1.35" fill="#ffffff"/><rect x="1795.1" y="199.49" width="5.9" height="1.35" fill="#9effff"/><rect x="1801.0" y="199.49" width="1.0" height="1.35" fill="#fbcb17"/><rect x="1802.0" y="199.49" width="7.9" height="1.35" fill="#9effff"/><rect x="1809.9" y="199.49" width="1.0" height="1.35" fill="#da70d6"/><rect x="1810.8" y="199.49" width="3.9" height="1.35" fill="#9effff"/><rect x="1814.8" y="199.49" width="1.0" height="1.35" fill="#ffffff"/><rect x="1816.8" y="199.49" width="1.0" height="1.35" fill="#92fc79"/><rect x="1817.7" y="199.49" width="3.9" height="1.35" fill="#a5ff90"/><rect x="1821.7" y="199.49" width="1.0" height="1.35" fill="#92fc79"/><rect x="1822.7" y="199.49" width="1.0" height="1.35" fill="#da70d6"/><rect x="1823.6" y="199.49" width="1.0" height="1.35" fill="#fbcb17"/><rect x="1787.2" y="203.44" width="1.0" height="1.35" fill="#0a84ff"/><rect x="1789.2" y="203.44" width="5.9" height="1.35" fill="#0a84ff"/><rect x="1796.1" y="203.44" width="4.9" height="1.35" fill="#0a84ff"/><rect x="1802.0" y="203.44" width="3.9" height="1.35" fill="#0a84ff"/><rect x="1806.9" y="203.44" width="3.0" height="1.35" fill="#0a84ff"/><rect x="1810.8" y="203.44" width="3.9" height="1.35" fill="#0a84ff"/><rect x="1815.8" y="203.44" width="2.0" height="1.35" fill="#0a84ff"/><rect x="1818.7" y="203.44" width="10.8" height="1.35" fill="#0a84ff"/><rect x="1787.2" y="205.42" width="3.0" height="1.35" fill="#ff9d00"/><rect x="1791.1" y="205.42" width="14.8" height="1.35" fill="#ffffff"/><rect x="1806.9" y="205.42" width="2.0" height="1.35" fill="#ff9d00"/><rect x="1809.9" y="205.42" width="11.8" height="1.35" fill="#ffffff"/><rect x="1791.1" y="207.39" width="3.9" height="1.35" fill="#ffffff"/><rect x="1796.1" y="207.39" width="1.0" height="1.35" fill="#ff9d00"/><rect x="1798.0" y="207.39" width="3.9" height="1.35" fill="#9effff"/><rect x="1802.0" y="207.39" width="1.0" height="1.35" fill="#fbcb17"/><rect x="1803.0" y="207.39" width="14.8" height="1.35" fill="#9effff"/><rect x="1817.7" y="207.39" width="1.0" height="1.35" fill="#fbcb17"/><rect x="1791.1" y="209.37" width="2.0" height="1.35" fill="#ff9d00"/><rect x="1794.1" y="209.37" width="4.9" height="1.35" fill="#ffffff"/><rect x="1799.0" y="209.37" width="5.9" height="1.35" fill="#9effff"/><rect x="1804.9" y="209.37" width="2.0" height="1.35" fill="#fbcb17"/><rect x="1807.9" y="209.37" width="3.0" height="1.35" fill="#ff9d00"/><rect x="1811.8" y="209.37" width="4.9" height="1.35" fill="#ffffff"/><rect x="1816.8" y="209.37" width="6.9" height="1.35" fill="#9effff"/><rect x="1823.6" y="209.37" width="2.0" height="1.35" fill="#fbcb17"/><rect x="1825.6" y="209.37" width="1.0" height="1.35" fill="#ffffff"/><rect x="1828.6" y="209.37" width="1.0" height="1.35" fill="#0a84ff"/><rect x="1830.5" y="209.37" width="3.9" height="1.35" fill="#0a84ff"/><rect x="1835.5" y="209.37" width="5.9" height="1.35" fill="#0a84ff"/><rect x="1842.4" y="209.37" width="3.9" height="1.35" fill="#0a84ff"/><rect x="1847.3" y="209.37" width="4.9" height="1.35" fill="#0a84ff"/><rect x="1795.1" y="211.35" width="3.9" height="1.35" fill="#ff9d00"/><rect x="1800.0" y="211.35" width="3.9" height="1.35" fill="#9effff"/><rect x="1803.9" y="211.35" width="1.0" height="1.35" fill="#fbcb17"/><rect x="1804.9" y="211.35" width="3.9" height="1.35" fill="#9effff"/><rect x="1808.9" y="211.35" width="1.0" height="1.35" fill="#ffffff"/><rect x="1810.8" y="211.35" width="1.0" height="1.35" fill="#92fc79"/><rect x="1811.8" y="211.35" width="2.0" height="1.35" fill="#a5ff90"/><rect x="1813.8" y="211.35" width="1.0" height="1.35" fill="#92fc79"/><rect x="1814.8" y="211.35" width="1.0" height="1.35" fill="#fbcb17"/><rect x="1816.8" y="211.35" width="2.0" height="1.35" fill="#ff9d00"/><rect x="1819.7" y="211.35" width="10.8" height="1.35" fill="#ffffff"/><rect x="1799.0" y="213.33" width="3.9" height="1.35" fill="#ffffff"/><rect x="1803.9" y="213.33" width="1.0" height="1.35" fill="#ff9d00"/><rect x="1805.9" y="213.33" width="7.9" height="1.35" fill="#9effff"/><rect x="1813.8" y="213.33" width="1.0" height="1.35" fill="#fbcb17"/><rect x="1814.8" y="213.33" width="1.0" height="1.35" fill="#92fc79"/><rect x="1815.8" y="213.33" width="10.8" height="1.35" fill="#a5ff90"/><rect x="1826.6" y="213.33" width="1.0" height="1.35" fill="#92fc79"/><rect x="1827.6" y="213.33" width="1.0" height="1.35" fill="#ffffff"/><rect x="1829.6" y="213.33" width="1.0" height="1.35" fill="#92fc79"/><rect x="1830.5" y="213.33" width="11.8" height="1.35" fill="#a5ff90"/><rect x="1842.4" y="213.33" width="1.0" height="1.35" fill="#92fc79"/><rect x="1843.3" y="213.33" width="1.0" height="1.35" fill="#fbcb17"/><rect x="1799.0" y="215.30" width="4.9" height="1.35" fill="#ffffff"/><rect x="1803.9" y="215.30" width="10.8" height="1.35" fill="#9effff"/><rect x="1814.8" y="215.30" width="1.0" height="1.35" fill="#fbcb17"/><rect x="1815.8" y="215.30" width="14.8" height="1.35" fill="#9effff"/><rect x="1830.5" y="215.30" width="2.0" height="1.35" fill="#da70d6"/><rect x="1832.5" y="215.30" width="1.0" height="1.35" fill="#fbcb17"/><rect x="1799.0" y="217.28" width="8.9" height="1.35" fill="#ffffff"/><rect x="1807.9" y="217.28" width="12.8" height="1.35" fill="#9effff"/><rect x="1820.7" y="217.28" width="1.0" height="1.35" fill="#fbcb17"/><rect x="1821.7" y="217.28" width="3.9" height="1.35" fill="#9effff"/><rect x="1825.6" y="217.28" width="1.0" height="1.35" fill="#fbcb17"/><rect x="1828.6" y="217.28" width="1.0" height="1.35" fill="#0a84ff"/><rect x="1830.5" y="217.28" width="5.9" height="1.35" fill="#0a84ff"/><rect x="1837.4" y="217.28" width="3.9" height="1.35" fill="#0a84ff"/><rect x="1842.4" y="217.28" width="2.0" height="1.35" fill="#0a84ff"/><rect x="1845.3" y="217.28" width="4.9" height="1.35" fill="#0a84ff"/><rect x="1851.2" y="217.28" width="9.8" height="1.35" fill="#0a84ff"/><rect x="1862.1" y="217.28" width="2.0" height="1.35" fill="#0a84ff"/><rect x="1865.0" y="217.28" width="3.9" height="1.35" fill="#0a84ff"/><rect x="1869.9" y="217.28" width="2.0" height="1.35" fill="#0a84ff"/><rect x="1872.9" y="217.28" width="4.9" height="1.35" fill="#0a84ff"/><rect x="1799.0" y="219.26" width="4.9" height="1.35" fill="#ffffff"/><rect x="1803.9" y="219.26" width="9.8" height="1.35" fill="#9effff"/><rect x="1813.8" y="219.26" width="1.0" height="1.35" fill="#fbcb17"/><rect x="1803.0" y="221.23" width="1.0" height="1.35" fill="#92fc79"/><rect x="1803.9" y="221.23" width="18.7" height="1.35" fill="#a5ff90"/><rect x="1822.7" y="221.23" width="1.0" height="1.35" fill="#92fc79"/><rect x="1823.6" y="221.23" width="1.0" height="1.35" fill="#ffffff"/><rect x="1803.0" y="223.21" width="1.0" height="1.35" fill="#ff9d00"/><rect x="1803.9" y="223.21" width="1.0" height="1.35" fill="#92fc79"/><rect x="1804.9" y="223.21" width="10.8" height="1.35" fill="#a5ff90"/><rect x="1816.8" y="223.21" width="8.9" height="1.35" fill="#a5ff90"/><rect x="1826.6" y="223.21" width="10.8" height="1.35" fill="#a5ff90"/><rect x="1837.4" y="223.21" width="1.0" height="1.35" fill="#92fc79"/><rect x="1838.4" y="223.21" width="1.0" height="1.35" fill="#ffffff"/><rect x="1841.4" y="223.21" width="1.0" height="1.35" fill="#0a84ff"/><rect x="1843.3" y="223.21" width="3.0" height="1.35" fill="#0a84ff"/><rect x="1847.3" y="223.21" width="5.9" height="1.35" fill="#0a84ff"/><rect x="1854.2" y="223.21" width="2.0" height="1.35" fill="#0a84ff"/><rect x="1857.1" y="223.21" width="8.9" height="1.35" fill="#0a84ff"/><rect x="1867.0" y="223.21" width="3.9" height="1.35" fill="#0a84ff"/><rect x="1799.0" y="225.19" width="1.0" height="1.35" fill="#fbcb17"/><rect x="1799.0" y="227.16" width="7.9" height="1.35" fill="#ffffff"/><rect x="1806.9" y="227.16" width="5.9" height="1.35" fill="#9effff"/><rect x="1812.8" y="227.16" width="1.0" height="1.35" fill="#fbcb17"/><rect x="1813.8" y="227.16" width="3.9" height="1.35" fill="#9effff"/><rect x="1817.7" y="227.16" width="1.0" height="1.35" fill="#fbcb17"/><rect x="1791.1" y="229.14" width="3.9" height="1.35" fill="#ff9d00"/><rect x="1795.1" y="229.14" width="1.0" height="1.35" fill="#ffffff"/><rect x="1795.1" y="231.12" width="4.9" height="1.35" fill="#9effff"/><rect x="1800.0" y="231.12" width="1.0" height="1.35" fill="#fbcb17"/><rect x="1801.0" y="231.12" width="1.0" height="1.35" fill="#ff9d00"/><rect x="1802.0" y="231.12" width="1.0" height="1.35" fill="#92fc79"/><rect x="1803.0" y="231.12" width="9.8" height="1.35" fill="#a5ff90"/><rect x="1813.8" y="231.12" width="5.9" height="1.35" fill="#a5ff90"/><rect x="1820.7" y="231.12" width="3.0" height="1.35" fill="#a5ff90"/><rect x="1824.6" y="231.12" width="5.9" height="1.35" fill="#a5ff90"/><rect x="1831.5" y="231.12" width="7.9" height="1.35" fill="#a5ff90"/><rect x="1840.4" y="231.12" width="2.0" height="1.35" fill="#a5ff90"/><rect x="1842.4" y="231.12" width="1.0" height="1.35" fill="#92fc79"/><rect x="1843.3" y="231.12" width="1.0" height="1.35" fill="#fbcb17"/><rect x="1846.3" y="231.12" width="1.0" height="1.35" fill="#0a84ff"/><rect x="1848.3" y="231.12" width="3.9" height="1.35" fill="#0a84ff"/><rect x="1853.2" y="231.12" width="4.9" height="1.35" fill="#0a84ff"/><rect x="1859.1" y="231.12" width="6.9" height="1.35" fill="#0a84ff"/><rect x="1867.0" y="231.12" width="3.9" height="1.35" fill="#0a84ff"/><rect x="1787.2" y="235.07" width="1.0" height="1.35" fill="#0a84ff"/><rect x="1789.2" y="235.07" width="6.9" height="1.35" fill="#0a84ff"/><rect x="1797.0" y="235.07" width="3.0" height="1.35" fill="#0a84ff"/><rect x="1801.0" y="235.07" width="9.8" height="1.35" fill="#0a84ff"/><rect x="1811.8" y="235.07" width="3.0" height="1.35" fill="#0a84ff"/><rect x="1815.8" y="235.07" width="3.0" height="1.35" fill="#0a84ff"/><rect x="1819.7" y="235.07" width="3.0" height="1.35" fill="#0a84ff"/><rect x="1823.6" y="235.07" width="3.0" height="1.35" fill="#0a84ff"/><rect x="1827.6" y="235.07" width="6.9" height="1.35" fill="#0a84ff"/><rect x="1787.2" y="237.05" width="13.8" height="1.35" fill="#ffffff"/><rect x="1802.0" y="237.05" width="1.0" height="1.35" fill="#ff9d00"/><rect x="1803.9" y="237.05" width="9.8" height="1.35" fill="#ffffff"/><rect x="1814.8" y="237.05" width="1.0" height="1.35" fill="#ff9d00"/><rect x="1816.8" y="237.05" width="2.0" height="1.35" fill="#ffffff"/><rect x="1787.2" y="241.00" width="1.0" height="1.35" fill="#0a84ff"/><rect x="1789.2" y="241.00" width="6.9" height="1.35" fill="#0a84ff"/><rect x="1797.0" y="241.00" width="2.0" height="1.35" fill="#0a84ff"/><rect x="1800.0" y="241.00" width="4.9" height="1.35" fill="#0a84ff"/><rect x="1805.9" y="241.00" width="3.9" height="1.35" fill="#0a84ff"/><rect x="1810.8" y="241.00" width="5.9" height="1.35" fill="#0a84ff"/><rect x="1817.7" y="241.00" width="3.0" height="1.35" fill="#0a84ff"/><rect x="1821.7" y="241.00" width="3.9" height="1.35" fill="#0a84ff"/><rect x="1826.6" y="241.00" width="3.0" height="1.35" fill="#0a84ff"/><rect x="1830.5" y="241.00" width="4.9" height="1.35" fill="#0a84ff"/><rect x="1787.2" y="242.98" width="3.9" height="1.35" fill="#ff9d00"/><rect x="1792.1" y="242.98" width="7.9" height="1.35" fill="#ffffff"/><rect x="1800.0" y="242.98" width="7.9" height="1.35" fill="#9effff"/><rect x="1807.9" y="242.98" width="1.0" height="1.35" fill="#fbcb17"/><rect x="1808.9" y="242.98" width="1.0" height="1.35" fill="#92fc79"/><rect x="1809.9" y="242.98" width="13.8" height="1.35" fill="#a5ff90"/><rect x="1823.6" y="242.98" width="1.0" height="1.35" fill="#92fc79"/><rect x="1824.6" y="242.98" width="1.0" height="1.35" fill="#ffffff"/><rect x="1826.6" y="242.98" width="3.0" height="1.35" fill="#ff9d00"/><rect x="1829.6" y="242.98" width="1.0" height="1.35" fill="#fbcb17"/><rect x="1831.5" y="242.98" width="2.0" height="1.35" fill="#ff9d00"/><rect x="1834.5" y="242.98" width="6.9" height="1.35" fill="#ffffff"/><rect x="1791.1" y="244.96" width="6.9" height="1.35" fill="#ffffff"/><rect x="1798.0" y="244.96" width="4.9" height="1.35" fill="#9effff"/><rect x="1803.0" y="244.96" width="1.0" height="1.35" fill="#fbcb17"/><rect x="1803.9" y="244.96" width="11.8" height="1.35" fill="#9effff"/><rect x="1815.8" y="244.96" width="1.0" height="1.35" fill="#ffffff"/><rect x="1817.7" y="244.96" width="14.8" height="1.35" fill="#9effff"/><rect x="1832.5" y="244.96" width="1.0" height="1.35" fill="#fbcb17"/><rect x="1835.5" y="244.96" width="1.0" height="1.35" fill="#0a84ff"/><rect x="1837.4" y="244.96" width="4.9" height="1.35" fill="#0a84ff"/><rect x="1843.3" y="244.96" width="3.9" height="1.35" fill="#0a84ff"/><rect x="1848.3" y="244.96" width="3.0" height="1.35" fill="#0a84ff"/><rect x="1852.2" y="244.96" width="7.9" height="1.35" fill="#0a84ff"/><rect x="1791.1" y="246.94" width="6.9" height="1.35" fill="#ffffff"/><rect x="1798.0" y="246.94" width="7.9" height="1.35" fill="#9effff"/><rect x="1805.9" y="246.94" width="1.0" height="1.35" fill="#fbcb17"/><rect x="1806.9" y="246.94" width="11.8" height="1.35" fill="#9effff"/><rect x="1818.7" y="246.94" width="1.0" height="1.35" fill="#ffffff"/><rect x="1820.7" y="246.94" width="13.8" height="1.35" fill="#9effff"/><rect x="1834.5" y="246.94" width="1.0" height="1.35" fill="#ffffff"/><rect x="1836.5" y="246.94" width="16.7" height="1.35" fill="#9effff"/><rect x="1853.2" y="246.94" width="2.0" height="1.35" fill="#da70d6"/><rect x="1855.2" y="246.94" width="1.0" height="1.35" fill="#fbcb17"/><rect x="1858.1" y="246.94" width="1.0" height="1.35" fill="#0a84ff"/><rect x="1860.1" y="246.94" width="3.9" height="1.35" fill="#0a84ff"/><rect x="1865.0" y="246.94" width="2.0" height="1.35" fill="#0a84ff"/></g></svg><div id="sbtrack"></div><div id="slider"></div><div id="sbmark"></div>
</div>
<div id="stborder"></div><div id="status"><div id="remote"></div></div><div class="t" style="left:89.13px;top:1053.51px;font-size:18px;line-height:20.11px;color:#b0b6be;transform:scaleX(0.9388)">0</div><div class="t" style="left:129.34px;top:1053.51px;font-size:18px;line-height:20.11px;color:#b0b6be;transform:scaleX(0.9956)">0</div><div class="t" style="left:189.09px;top:1053.51px;font-size:18px;line-height:20.11px;color:#b0b6be;transform:scaleX(0.9956)">0</div><div class="t" style="left:1181.90px;top:1053.51px;font-size:18px;line-height:20.11px;color:#b0b6be;transform:scaleX(0.9668)">Ln 14, Col 11</div><div class="t" style="left:1308.54px;top:1053.51px;font-size:18px;line-height:20.11px;color:#b0b6be;transform:scaleX(0.9199)">Spaces: 2</div><div class="t" style="left:1406.01px;top:1053.51px;font-size:18px;line-height:20.11px;color:#b0b6be;transform:scaleX(0.9367)">UTF-8</div><div class="t" style="left:1477.71px;top:1053.51px;font-size:18px;line-height:20.11px;color:#b0b6be;transform:scaleX(0.8268)">CRLF</div><div class="t" style="left:1539.91px;top:1053.51px;font-size:18px;line-height:20.11px;color:#b0b6be;transform:scaleX(0.9824)">{ }</div><div class="t" style="left:1567.11px;top:1053.51px;font-size:18px;line-height:20.11px;color:#b0b6be;transform:scaleX(1.0256)">Python</div><div class="t" style="left:1644.76px;top:1053.51px;font-size:18px;line-height:20.11px;color:#b0b6be;transform:scaleX(0.9910)">3.12.2 64-bit</div><div class="t" style="left:1792.97px;top:1053.51px;font-size:18px;line-height:20.11px;color:#b0b6be;transform:scaleX(0.9618)">Go Live</div><svg style="left:0;top:0" width="1920" height="1080" ><path fill="none" stroke="#1b2430" stroke-width="1.5" d="M19.4 1060.7L24.6 1065.9L19.4 1071.1 M31.6 1055.4L26.4 1060.4L31.6 1065.4"/><circle fill="none" stroke="#a3abb4" stroke-width="1.6" stroke-linejoin="round" cx="73.3" cy="1063.5" r="8.4"/><path fill="none" stroke="#a3abb4" stroke-width="1.6" stroke-linejoin="round" d="M69.6 1059.8L77 1067.2 M77 1059.8L69.6 1067.2"/><path fill="none" stroke="#a3abb4" stroke-width="1.6" stroke-linejoin="round" d="M114 1055.6L122.6 1070.8H105.4Z"/><path stroke="#a3abb4" stroke-width="1.7" d="M114 1060.8V1066 M114 1067.4V1069.2"/><path fill="none" stroke="#a3abb4" stroke-width="1.6" stroke-linejoin="round" d="M174.5 1062.5L169.6 1072 M174.5 1062.5L179.4 1072 M171.3 1068.6H177.7"/><circle cx="174.5" cy="1061" r="1.5" fill="none" stroke="#a3abb4" stroke-width="1.3"/><path fill="none" stroke="#a3abb4" stroke-width="1.6" stroke-linejoin="round" stroke-width="1.4" d="M170.8 1057.3C169.3 1059.3 169.3 1062.7 170.8 1064.7 M178.2 1057.3C179.7 1059.3 179.7 1062.7 178.2 1064.7 M168.3 1055.2C165.6 1058.6 165.6 1063.4 168.3 1066.8 M180.7 1055.2C183.4 1058.6 183.4 1063.4 180.7 1066.8"/><path fill="none" stroke="#a3abb4" stroke-width="1.6" stroke-linejoin="round" d="M1774.6 1068.3A7.1 7.1 0 1 1 1782.4 1068.3"/><path fill="none" stroke="#a3abb4" stroke-width="1.6" stroke-linejoin="round" stroke-width="1.4" d="M1776.4 1065.4A3.6 3.6 0 1 1 1780.6 1065.4"/><path stroke="#a3abb4" stroke-width="2.6" stroke-linecap="round" d="M1778.5 1064.4V1071.2"/><path fill="none" stroke="#a3abb4" stroke-width="1.6" stroke-linejoin="round" d="M1880.3 1068.6H1894.3L1892.6 1066V1061.3A5.3 5.3 0 0 0 1882 1061.3V1066Z M1885.3 1070.6Q1887.3 1072.6 1889.3 1070.6"/></svg>

<svg style="left:0;top:0;filter:drop-shadow(1px 1.5px 1.5px rgba(0,0,0,0.45))" width="1920" height="1080"><path d="M928.7 420.5 L928.7 488.9 L945.5 474.7 L959.3 498.5 Q961.5 502 965 500.3 Q968.5 498.5 967 495 L955 470.5 L977.8 469.8 Z" fill="#f8f6f9" stroke="#03060b" stroke-width="6.6" stroke-linejoin="round" paint-order="stroke fill"/></svg>

</div>
</body></html>
